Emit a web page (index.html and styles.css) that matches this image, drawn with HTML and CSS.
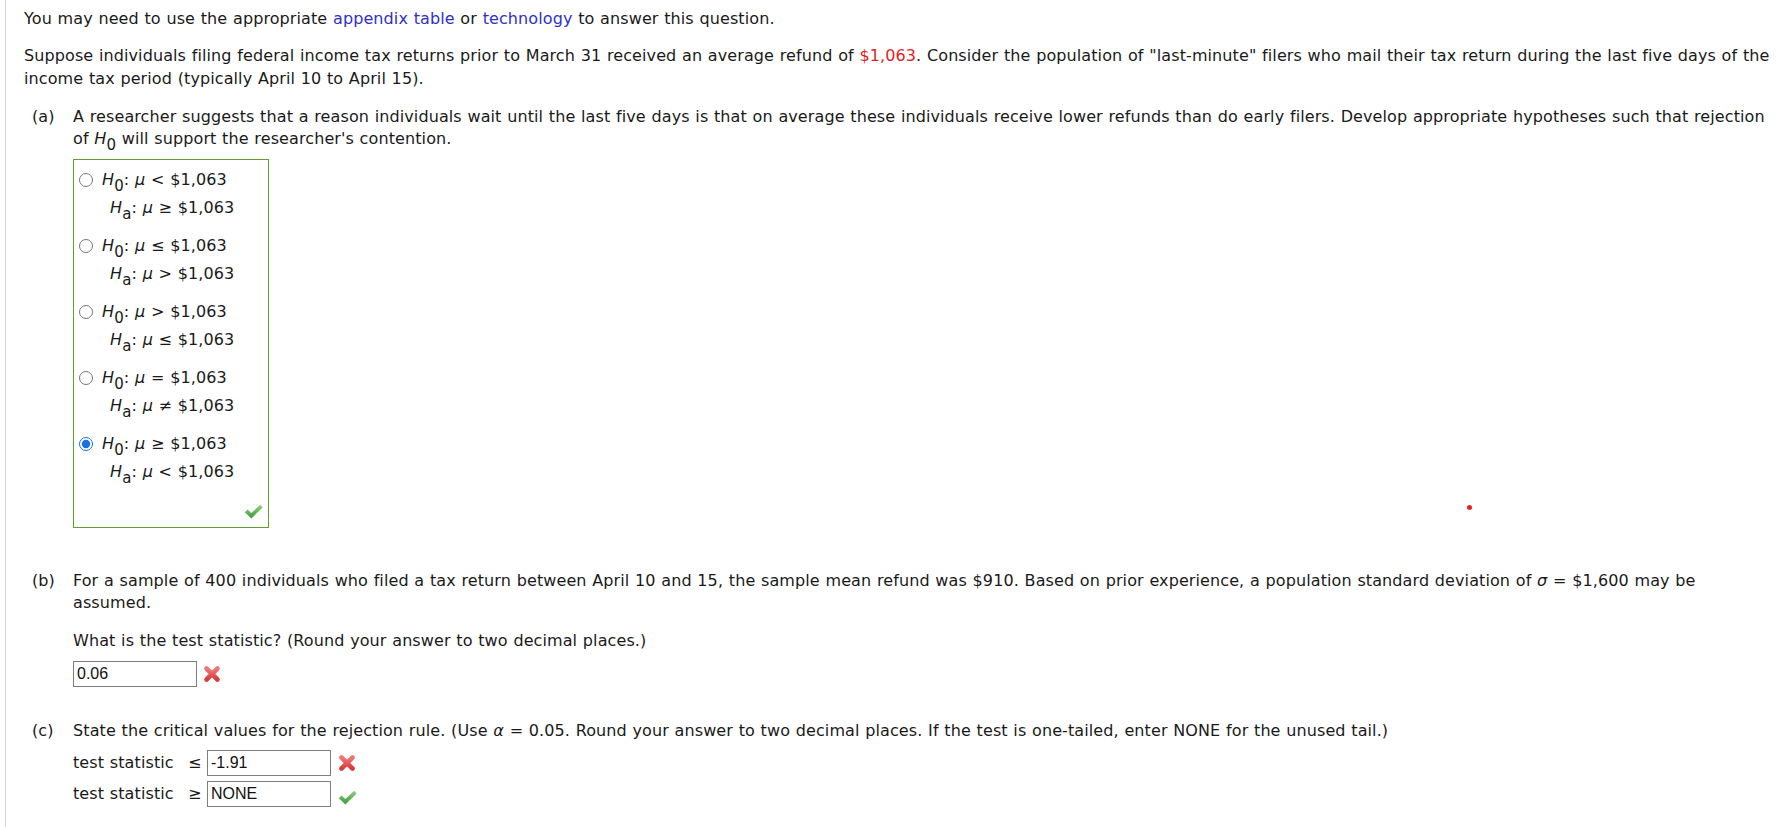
FILE: index.html
```html
<!DOCTYPE html>
<html lang="en">
<head>
<meta charset="utf-8">
<title>Hypothesis test question</title>
<link rel="stylesheet" href="styles.css">
</head>
<body>
<div class="page">
  <span class="dot"></span>
  <p>You may need to use the appropriate <a class="link" href="#">appendix table</a> or <a class="link" href="#">technology</a> to answer this question.</p>
  <p class="intro2">Suppose individuals filing federal income tax returns prior to March 31 received an average refund of <span class="red">$1,063</span>. Consider the population of "last-minute" filers who mail their tax return during the last five days of the<br>income tax period (typically April 10 to April 15).</p>

  <div class="part part-a">
    <div class="part-label">(a)</div>
    <div class="part-body">
      <p>A researcher suggests that a reason individuals wait until the last five days is that on average these individuals receive lower refunds than do early filers. Develop appropriate hypotheses such that rejection<br>of <i>H</i><sub>0</sub> will support the researcher's contention.</p>
      <div class="choices">
        <label class="choice"><input type="radio" name="hyp"><span class="hyp"><span class="hyp-line"><i>H</i><sub>0</sub>: <i>μ</i> &lt; $1,063</span><span class="hyp-line hyp-alt"><i>H</i><sub>a</sub>: <i>μ</i> ≥ $1,063</span></span></label>
        <label class="choice"><input type="radio" name="hyp"><span class="hyp"><span class="hyp-line"><i>H</i><sub>0</sub>: <i>μ</i> ≤ $1,063</span><span class="hyp-line hyp-alt"><i>H</i><sub>a</sub>: <i>μ</i> &gt; $1,063</span></span></label>
        <label class="choice"><input type="radio" name="hyp"><span class="hyp"><span class="hyp-line"><i>H</i><sub>0</sub>: <i>μ</i> &gt; $1,063</span><span class="hyp-line hyp-alt"><i>H</i><sub>a</sub>: <i>μ</i> ≤ $1,063</span></span></label>
        <label class="choice"><input type="radio" name="hyp"><span class="hyp"><span class="hyp-line"><i>H</i><sub>0</sub>: <i>μ</i> = $1,063</span><span class="hyp-line hyp-alt"><i>H</i><sub>a</sub>: <i>μ</i> ≠ $1,063</span></span></label>
        <label class="choice"><input type="radio" name="hyp" checked><span class="hyp"><span class="hyp-line"><i>H</i><sub>0</sub>: <i>μ</i> ≥ $1,063</span><span class="hyp-line hyp-alt"><i>H</i><sub>a</sub>: <i>μ</i> &lt; $1,063</span></span></label>
        <div class="mark-row">
          <svg class="check" width="19" height="15" viewBox="0 0 19 15"><defs><linearGradient id="g1" x1="0" y1="0" x2="0" y2="1"><stop offset="0" stop-color="#8fd07f"/><stop offset="1" stop-color="#3e9a3a"/></linearGradient></defs><path d="M0.8 8.2 L3.6 5.6 L7.3 9 L16.2 0.8 L18.6 3.4 L7.4 14.4 Z" fill="url(#g1)"/></svg>
        </div>
      </div>
    </div>
  </div>

  <div class="part part-b">
    <div class="part-label">(b)</div>
    <div class="part-body">
      <p>For a sample of 400 individuals who filed a tax return between April 10 and 15, the sample mean refund was $910. Based on prior experience, a population standard deviation of <i>σ</i> = $1,600 may be<br>assumed.</p>
      <p class="question">What is the test statistic? (Round your answer to two decimal places.)</p>
      <div class="answer-row">
        <input class="answer" type="text" value="0.06" readonly>
        <svg class="cross" width="18" height="18" viewBox="0 0 18 18"><defs><linearGradient id="r1" x1="0" y1="0" x2="0" y2="1"><stop offset="0" stop-color="#f27777"/><stop offset="1" stop-color="#d93b3b"/></linearGradient></defs><path d="M3.5 3.5 L14.5 14.5 M14.5 3.5 L3.5 14.5" stroke="url(#r1)" stroke-width="4.6" stroke-linecap="round"/></svg>
      </div>
    </div>
  </div>

  <div class="part part-c">
    <div class="part-label">(c)</div>
    <div class="part-body">
      <p>State the critical values for the rejection rule. (Use <i>α</i> = 0.05. Round your answer to two decimal places. If the test is one-tailed, enter NONE for the unused tail.)</p>
      <div class="crit-row">
        <span class="crit-label">test statistic</span><span class="crit-op">≤</span>
        <input class="answer" type="text" value="-1.91" readonly>
        <svg class="cross cross-c" width="18" height="18" viewBox="0 0 18 18"><defs><linearGradient id="r2" x1="0" y1="0" x2="0" y2="1"><stop offset="0" stop-color="#f27777"/><stop offset="1" stop-color="#d93b3b"/></linearGradient></defs><path d="M3.5 3.5 L14.5 14.5 M14.5 3.5 L3.5 14.5" stroke="url(#r2)" stroke-width="4.6" stroke-linecap="round"/></svg>
      </div>
      <div class="crit-row">
        <span class="crit-label">test statistic</span><span class="crit-op">≥</span>
        <input class="answer" type="text" value="NONE" readonly>
        <svg class="check check-c" width="19" height="15" viewBox="0 0 19 15"><defs><linearGradient id="g2" x1="0" y1="0" x2="0" y2="1"><stop offset="0" stop-color="#8fd07f"/><stop offset="1" stop-color="#3e9a3a"/></linearGradient></defs><path d="M0.8 8.2 L3.6 5.6 L7.3 9 L16.2 0.8 L18.6 3.4 L7.4 14.4 Z" fill="url(#g2)"/></svg>
      </div>
    </div>
  </div>
</div>
</body>
</html>
```

FILE: styles.css
```css
html, body {
  margin: 0;
  padding: 0;
  background: #ffffff;
}

body {
  font-family: "DejaVu Sans", Verdana, sans-serif;
  font-size: 16px;
  line-height: 22px;
  color: #1a1a1a;
  word-spacing: 0.5px;
  letter-spacing: 0.1px;
}

.page {
  position: relative;
  margin-left: 5px;
  border-left: 1px solid #d4d4d4;
  padding: 8px 0 0 18px;
  min-height: 100vh;
  box-sizing: border-box;
}

p {
  margin: 0;
}

.link {
  color: #3030c8;
  text-decoration: none;
}

.red {
  color: #e01e1e;
}

.dot {
  position: absolute;
  left: 1461px;
  top: 505px;
  width: 5px;
  height: 5px;
  border-radius: 50%;
  background: #e3241f;
}

.intro2 {
  margin-top: 14px;
  line-height: 23px;
}

sub {
  font-size: 15px;
  line-height: 0;
  vertical-align: -6px;
  font-style: normal;
}

.part {
  display: flex;
  margin-left: 8px;
}

.part-label {
  flex: none;
  width: 41px;
}

.part-body {
  flex: 1;
  min-width: 0;
}

.part-a {
  margin-top: 16px;
}

.choices {
  margin-top: 9px;
  width: 196px;
  box-sizing: border-box;
  border: 1px solid #5f9f35;
  padding: 6px 5px 8px 5px;
}

.choice {
  display: flex;
  align-items: flex-start;
  line-height: 28px;
  margin-bottom: 10px;
  cursor: pointer;
}

.choice input {
  flex: none;
  width: 14px;
  height: 14px;
  margin: 7px 9px 0 0;
  accent-color: #1a6fe6;
}

.hyp {
  display: flex;
  flex-direction: column;
}

.hyp-line {
  display: block;
  white-space: nowrap;
}

.hyp-alt {
  padding-left: 8px;
}

.mark-row {
  display: flex;
  justify-content: flex-end;
  padding-top: 8px;
}

.check, .cross {
  display: block;
  flex: none;
}

.part-b {
  margin-top: 42px;
}

.question {
  margin-top: 16px;
}

.answer-row {
  display: flex;
  align-items: center;
  gap: 6px;
  margin-top: 9px;
}

.answer {
  width: 124px;
  height: 26px;
  box-sizing: border-box;
  border: 1px solid #7d7d7d;
  border-radius: 0;
  padding: 0 3px;
  margin: 0;
  font-family: "Liberation Sans", Arial, sans-serif;
  font-size: 16px;
  letter-spacing: 0;
  word-spacing: 0;
  color: #111;
  background: #fff;
}

.part-c {
  margin-top: 33px;
}

.crit-row {
  display: flex;
  align-items: center;
  margin-top: 8px;
}

.crit-row + .crit-row {
  margin-top: 5px;
}

.crit-label {
  flex: none;
  width: 115px;
}

.crit-op {
  flex: none;
  width: 19px;
}

.cross-c {
  margin-left: 7px;
}

.check-c {
  margin-left: 7px;
  margin-top: 6px;
}
```
